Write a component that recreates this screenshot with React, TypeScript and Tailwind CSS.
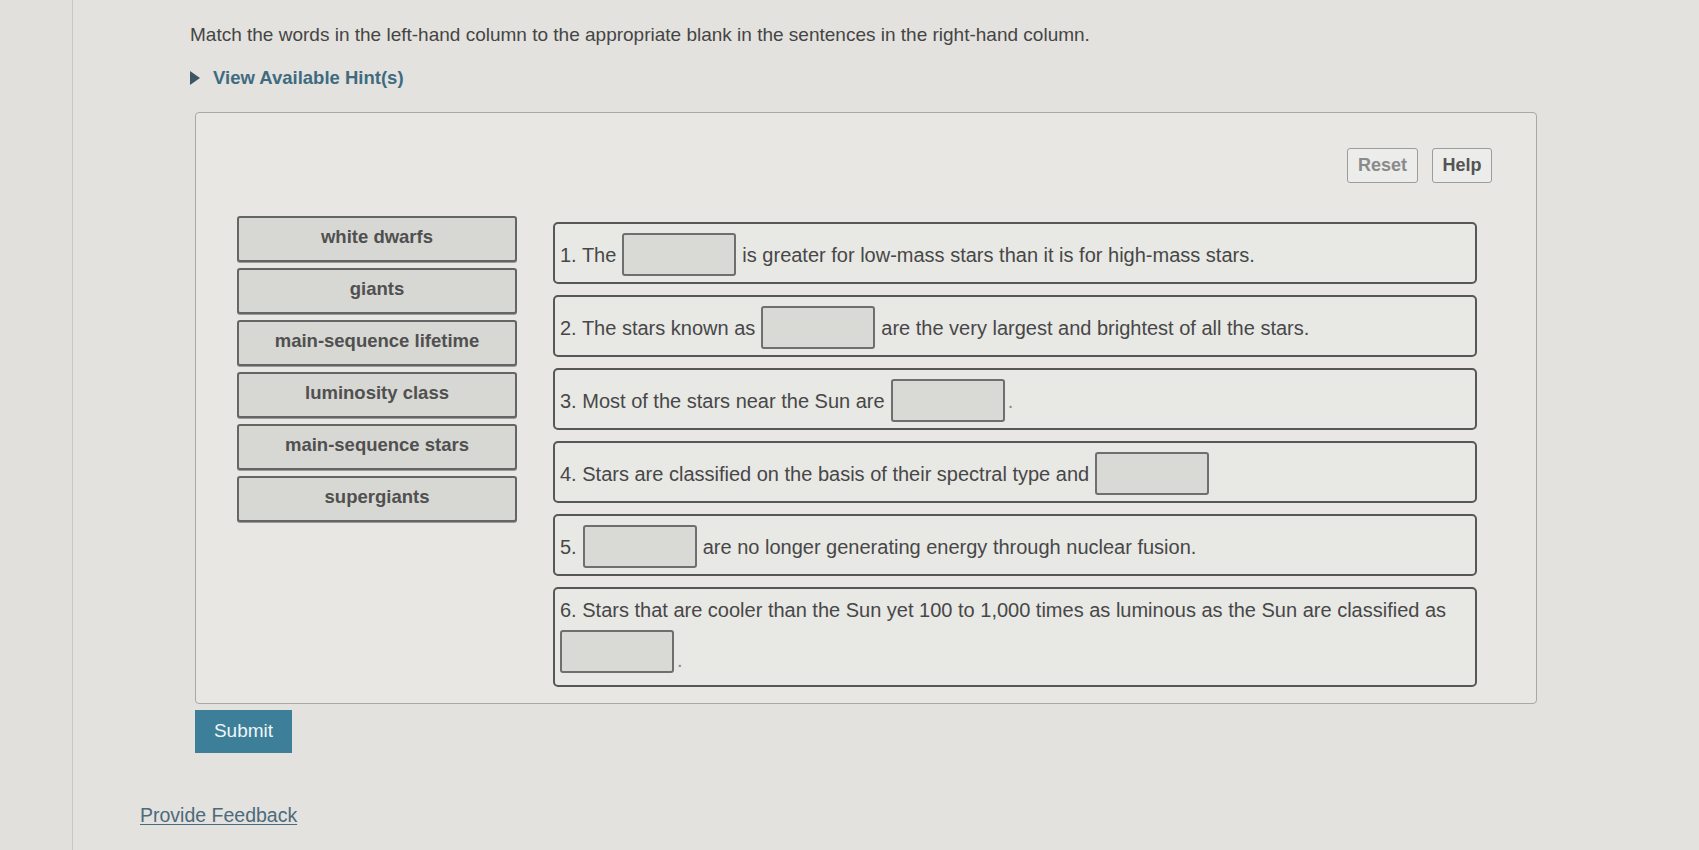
import React from "react";

const FONT = { fontFamily: '"Liberation Sans", Arial, sans-serif' };

function Blank() {
  return (
    <span className="inline-block w-[114px] h-[43px] shrink-0 bg-[#d9d9d5] border-2 border-[#6f6f6f] rounded-[3px]" />
  );
}

function Item({ label }: { label: string }) {
  return (
    <div className="h-[46px] w-[280px] flex items-center justify-center pb-[5px] bg-[#d7d7d3] border-2 border-[#656565] rounded-[3px] text-[18.5px] font-bold text-[#505050] shadow-[0_1px_0_#9a9a9a]">
      {label}
    </div>
  );
}

function Row({ children }: { children: React.ReactNode }) {
  return (
    <div className="h-[62px] w-[924px] flex items-start pt-[9px] px-[5px] border-2 border-[#575757] rounded-[5px] bg-[#e8e8e5] text-[20px] text-[#474747] leading-[26px]">
      <div className="flex items-center gap-[6px] whitespace-nowrap">{children}</div>
    </div>
  );
}

export default function App() {
  const items = [
    "white dwarfs",
    "giants",
    "main-sequence lifetime",
    "luminosity class",
    "main-sequence stars",
    "supergiants",
  ];
  return (
    <div style={FONT} className="w-[1699px] h-[850px] bg-[#e3e2de] flex overflow-hidden">
      <div className="w-[73px] h-full border-r border-[#c8c7c2] bg-[#e1e0dc]" />
      <div className="flex-1 flex flex-col">
        <div className="pt-[22px] pl-[117px] text-[19px] leading-[26px] text-[#454545]">
          Match the words in the left-hand column to the appropriate blank in the sentences in the right-hand column.
        </div>
        <div className="mt-[17px] pl-[117px] flex items-center gap-[13px] h-[26px]">
          <svg width="10" height="14" viewBox="0 0 10 14">
            <polygon points="0,0 10,7 0,14" fill="#3d5663" />
          </svg>
          <span className="text-[18.5px] font-bold text-[#3f6b80]">View Available Hint(s)</span>
        </div>
        <div className="mt-[21px] ml-[122px] w-[1342px] h-[592px] border border-[#a8a8a4] rounded-[4px] bg-[#e8e7e4] flex flex-col">
          <div className="pt-[35px] pr-[44px] flex justify-end gap-[14px]">
            <button className="h-[35px] w-[71px] border-[1.5px] border-[#9c9c9c] rounded-[3px] bg-[#ececea] text-[18px] font-bold text-[#8a8a8a]">
              Reset
            </button>
            <button className="h-[35px] w-[60px] border-[1.5px] border-[#9c9c9c] rounded-[3px] bg-[#ececea] text-[18px] font-bold text-[#545454]">
              Help
            </button>
          </div>
          <div className="mt-[33px] pl-[41px] flex gap-[36px]">
            <div className="flex flex-col gap-[6px]">
              {items.map((l) => (
                <Item key={l} label={l} />
              ))}
            </div>
            <div className="mt-[6px] flex flex-col gap-[11px]">
              <Row>
                <span>1. The</span>
                <Blank />
                <span>is greater for low-mass stars than it is for high-mass stars.</span>
              </Row>
              <Row>
                <span>2. The stars known as</span>
                <Blank />
                <span>are the very largest and brightest of all the stars.</span>
              </Row>
              <Row>
                <span>3. Most of the stars near the Sun are</span>
                <Blank />
                <span className="-ml-[3px] text-[#8a8a8a]">.</span>
              </Row>
              <Row>
                <span>4. Stars are classified on the basis of their spectral type and</span>
                <Blank />
              </Row>
              <Row>
                <span>5.</span>
                <Blank />
                <span>are no longer generating energy through nuclear fusion.</span>
              </Row>
              <div className="h-[100px] w-[924px] flex flex-col px-[5px] border-2 border-[#575757] rounded-[5px] bg-[#e8e8e5] text-[20px] text-[#474747] leading-[26px]">
                <div className="pt-[8px] whitespace-nowrap">
                  6. Stars that are cooler than the Sun yet 100 to 1,000 times as luminous as the Sun are classified as
                </div>
                <div className="mt-[7px] flex items-end gap-[3px]">
                  <Blank />
                  <span className="text-[#8a8a8a]">.</span>
                </div>
              </div>
            </div>
          </div>
        </div>
        <div className="mt-[6px] ml-[122px]">
          <button className="w-[97px] h-[43px] bg-[#3d7f99] text-[#eef6f8] text-[19px]">Submit</button>
        </div>
        <div className="mt-[50px] ml-[67px]">
          <span className="text-[19.5px] leading-[24px] text-[#4b6a7d] underline underline-offset-2">Provide Feedback</span>
        </div>
      </div>
    </div>
  );
}
